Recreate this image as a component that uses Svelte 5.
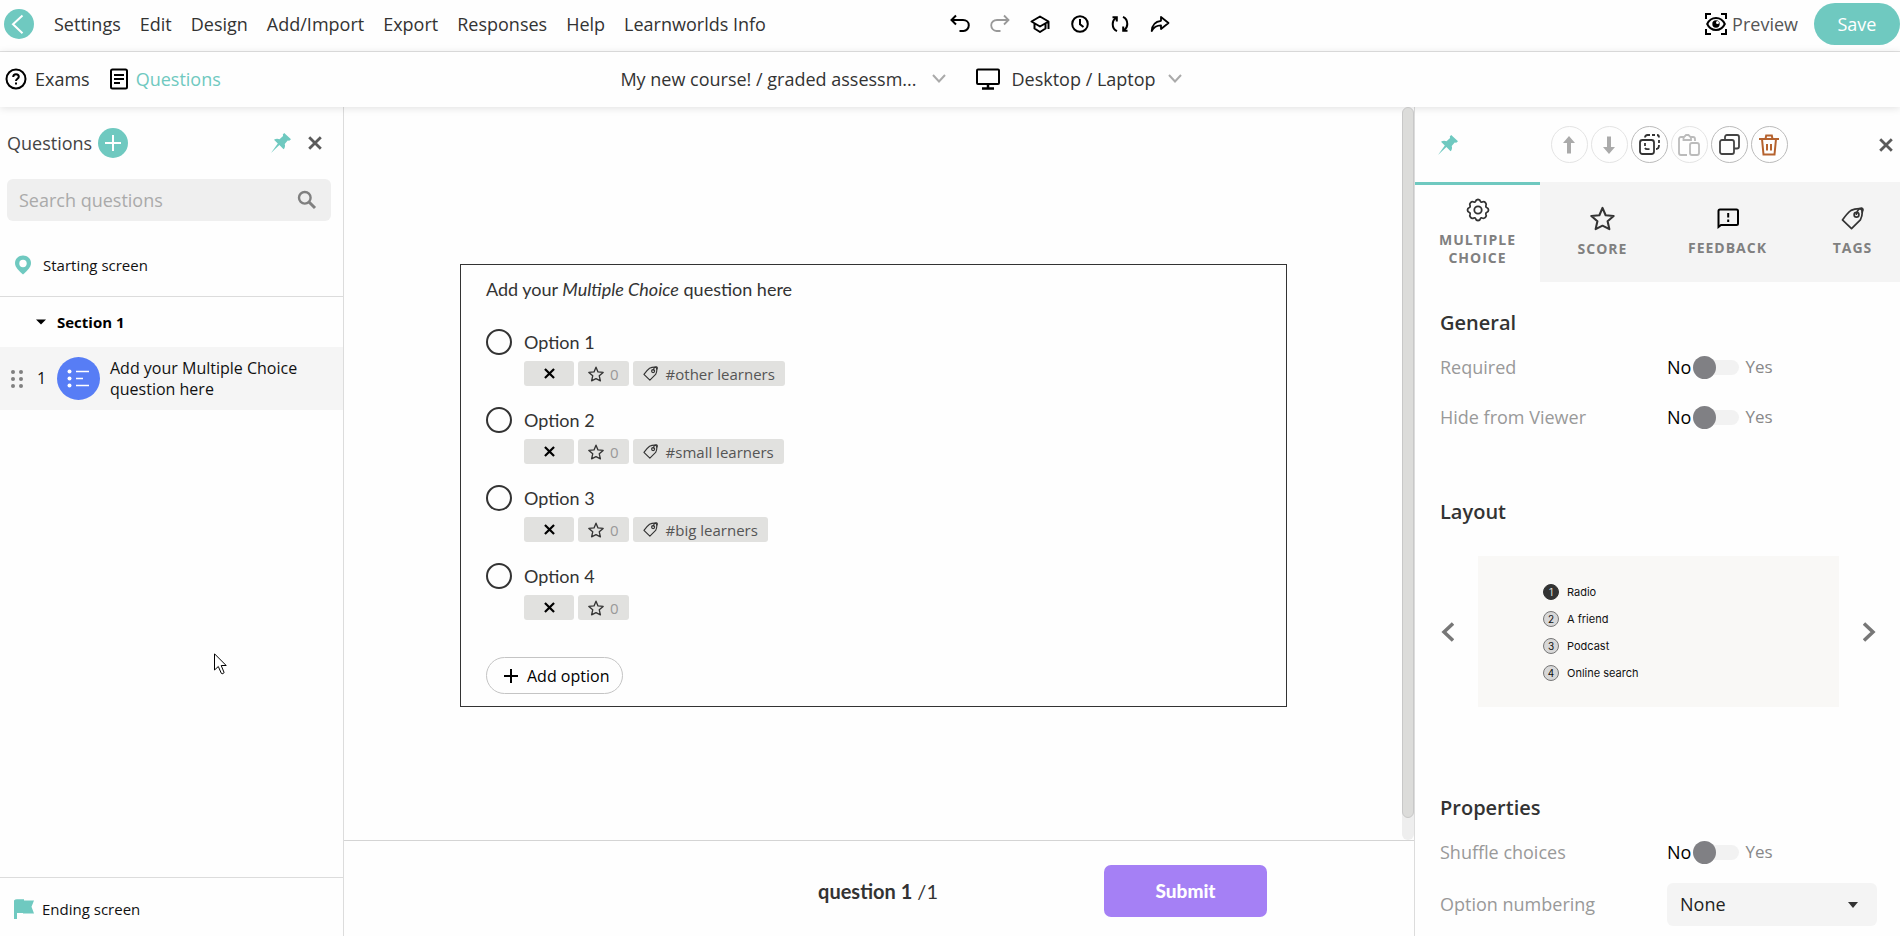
<script>
  const menu = ["Settings", "Edit", "Design", "Add/Import", "Export", "Responses", "Help", "Learnworlds Info"];

  let options = $state([
    { label: "Option 1", score: 0, tag: "#other learners" },
    { label: "Option 2", score: 0, tag: "#small learners" },
    { label: "Option 3", score: 0, tag: "#big learners" },
    { label: "Option 4", score: 0, tag: "" }
  ]);

  const layoutItems = ["Radio", "A friend", "Podcast", "Online search"];

  let tab = $state("choice");
  let search = $state("");
  let numbering = $state("None");
  let required = $state(false);
  let hidden = $state(false);
  let shuffle = $state(false);

  function addOption() {
    options.push({ label: "Option " + (options.length + 1), score: 0, tag: "" });
  }
</script>

{#snippet star(size)}
  <svg width={size} height={size} viewBox="0 0 24 24" fill="none" stroke="#333" stroke-width="2" stroke-linejoin="round">
    <path d="M12 1.8l3 7.1 7.7.7-5.8 5.1 1.7 7.5-6.6-3.3-6.6 3.3 1.7-7.5L1.3 9.6 9 8.9z" />
  </svg>
{/snippet}

{#snippet tagIcon(size)}
  <svg width={size} height={size} viewBox="0 0 24 24" fill="none" stroke="#333" stroke-width="1.800" stroke-linejoin="round" stroke-linecap="round">
    <path d="M1.500 13.500C4 10 7 6 10.500 3.500 13 2.300 16 1.800 19 1.800c2 0 3.200 1.500 3.200 3.700 0 3-.7 5.500-2 8L11 22.500z" />
    <circle cx="16.200" cy="8" r="2.500" />
    <path d="M16 7.500C17 4 19 1 21.500 1.200c1.800.3 1.800 2.300.5 4" />
  </svg>
{/snippet}

{#snippet pin()}
  <svg width="22" height="22" viewBox="0 0 22 22" fill="#6fc9c0">
    <path d="M14.200 1l6.800 6.200-1.800 1.500-1.500-.2-3 3.400c.7 1.900.3 3.800-1.100 5.400L9.400 13 1 21l6.800-9.400L4 7.700c1.800-1.200 3.700-1.300 5.500-.5l3.600-3.100-.3-1.700z" />
  </svg>
{/snippet}

{#snippet cross(size, color)}
  <svg width={size} height={size} viewBox="0 0 14 14" fill="none" stroke={color} stroke-width="2.800">
    <path d="M1.200 1.200l11.600 11.600M12.800 1.200L1.200 12.800" />
  </svg>
{/snippet}

{#snippet chevron()}
  <svg width="14" height="9" viewBox="0 0 14 9" fill="none" stroke="#aaa" stroke-width="2">
    <path d="M1 1l6 6.500L13 1" />
  </svg>
{/snippet}

<div class="app">
  <header class="topbar">
    <div class="left">
      <button class="round" aria-label="Back">
        <svg width="30" height="30" viewBox="0 0 30 30" fill="none" stroke="#fff" stroke-width="2"><path d="M18.500 6.500L9 15.200l9.500 9" /></svg>
      </button>
      <nav>
        {#each menu as item}
          <a href="#menu">{item}</a>
        {/each}
      </nav>
    </div>

    <div class="tools">
      <button aria-label="Undo">
        <svg width="20" height="20" viewBox="0 0 20 20" fill="none" stroke="#000" stroke-width="2"><path d="M6 1.500L1.500 6 6 10.500M1.500 6H13c3.300 0 5.800 2.200 5.800 5.200S16.500 17 13.500 17h-4" /></svg>
      </button>
      <button aria-label="Redo">
        <svg width="20" height="20" viewBox="0 0 20 20" fill="none" stroke="#999" stroke-width="1.800"><path d="M14 1.500L18.500 6 14 10.500M18.500 6H7C3.700 6 1.200 8.200 1.200 11.200S3.500 17 6.500 17h4" /></svg>
      </button>
      <button aria-label="Course">
        <svg width="20" height="20" viewBox="0 0 20 20" fill="none" stroke="#000" stroke-width="2" stroke-linejoin="round"><path d="M10 2.500L1.500 7.500l8.500 5 8.500-5zM4.500 9.500v5l5.500 3.500 5.500-3.500v-5M18.500 7.500V15" /></svg>
      </button>
      <button aria-label="History">
        <svg width="20" height="20" viewBox="0 0 20 20" fill="none" stroke="#000" stroke-width="2"><circle cx="10" cy="10" r="7.800" /><path d="M10 5v5.200l3.500 2.800" /></svg>
      </button>
      <button aria-label="Sync">
        <svg width="20" height="20" viewBox="0 0 20 20" fill="none" stroke="#000" stroke-width="2"><path d="M7 17.200C4.300 16 2.700 13.200 2.700 10c0-2.600 1.200-4.700 3.300-6.200M13 2.800c2.700 1.200 4.300 4 4.300 7.200 0 2.600-1.200 4.700-3.300 6.200" /><path d="M2.500 3.200h4.300v4.300M17.500 16.800h-4.300v-4.300" /></svg>
      </button>
      <button aria-label="Share">
        <svg width="20" height="20" viewBox="0 0 20 20" fill="none" stroke="#000" stroke-width="1.800" stroke-linejoin="round"><path d="M11 3l7.500 6L11 15v-3.700c-4.300 0-7.300 1.700-9.300 5.700.3-5.700 3.500-9.500 9.300-10.200z" /></svg>
      </button>
    </div>

    <div class="actions">
      <button class="preview">
        <svg width="22" height="22" viewBox="0 0 22 22" fill="none" stroke="#000" stroke-width="2"><path d="M1 6V1h5M16 1h5v5M21 16v5h-5M6 21H1v-5" /><path d="M2.200 11C4 7.200 7.200 5 11 5s7 2.200 8.800 6c-1.800 3.800-5 6-8.800 6s-7-2.200-8.800-6z" /><circle cx="11" cy="11" r="3.700" fill="#000" stroke="none" /><circle cx="12.500" cy="9.500" r="1.500" fill="#fff" stroke="none" /></svg>
        Preview
      </button>
      <button class="save">Save</button>
    </div>
  </header>

  <div class="subbar">
    <div class="views">
      <a href="#exams">
        <svg width="22" height="22" viewBox="0 0 22 22" fill="none" stroke="#000" stroke-width="2"><circle cx="11" cy="11" r="9.500" /><path d="M8.200 9c0-1.800 1.200-2.800 2.800-2.800s2.800 1 2.800 2.500c0 2-2.800 2-2.800 4.300M11 14.500v2" /></svg>
        Exams
      </a>
      <a href="#questions" class="on">
        <svg width="18" height="22" viewBox="0 0 18 22" fill="none" stroke="#000" stroke-width="2"><rect x="1" y="1.500" width="16" height="19" rx="1.500" /><path d="M4 7h10M4 11h10M4 15h6" /></svg>
        Questions
      </a>
    </div>
    <button class="picker course"><span>My new course! / graded assessm...</span>{@render chevron()}</button>
    <button class="picker">
      <svg width="24" height="22" viewBox="0 0 24 22" fill="none" stroke="#000" stroke-width="2"><rect x="1" y="1.500" width="22" height="14.500" rx="1" /><path d="M12 16v4M6 20.500h12" stroke-width="2.500" /></svg>
      <span>Desktop / Laptop</span>
      {@render chevron()}
    </button>
  </div>

  <div class="workspace">
    <aside class="questions">
      <div class="panel-head">
        <h2>Questions</h2>
        <button class="round" aria-label="Add question">
          <svg width="30" height="30" viewBox="0 0 30 30" stroke="#fff" stroke-width="2"><path d="M15 7v16M7 15h16" /></svg>
        </button>
        <button class="pin" aria-label="Pin panel">{@render pin()}</button>
        <button aria-label="Close panel">{@render cross(14, "#5a5a5a")}</button>
      </div>

      <label class="search">
        <input type="text" placeholder="Search questions" aria-label="Search questions" bind:value={search} />
        <svg width="20" height="20" viewBox="0 0 20 20" fill="none" stroke="#808080"><circle cx="7.800" cy="7.800" r="5.800" stroke-width="2.400" /><path d="M12 12l6 6" stroke-width="3" /></svg>
      </label>

      <a class="screen" href="#start">
        <svg width="16" height="20" viewBox="0 0 16 20"><path d="M8 .5c4.500 0 8 3.300 8 7.600 0 4-3.300 7.400-8 11.400C3.300 15.500 0 12.100 0 8.100 0 3.800 3.500.5 8 .5z" fill="#6fc9c0" /><circle cx="8" cy="8.500" r="3.700" fill="#fff" /></svg>
        Starting screen
      </a>

      <button class="section">
        <svg width="10" height="6" viewBox="0 0 10 6"><path d="M0 .5h10L5 5.500z" /></svg>
        Section 1
      </button>

      <a class="question" href="#q1">
        <svg width="12" height="20" viewBox="0 0 12 20" fill="#808080">
          {#each [3, 10, 17] as y}
            <circle cx="2" cy={y} r="2" /><circle cx="10" cy={y} r="2" />
          {/each}
        </svg>
        <span class="num">1</span>
        <svg width="43" height="43" viewBox="0 0 43 43"><circle cx="21.500" cy="21.500" r="21.500" fill="#577df5" /><g fill="#fff"><circle cx="12.500" cy="14.500" r="2" /><circle cx="12.500" cy="21.500" r="2" /><circle cx="12.500" cy="28.500" r="2" /></g><path d="M19 14.500h13M19 21.500h7M19 28.500h13" stroke="#fff" stroke-width="1.500" /></svg>
        <span class="title">Add your Multiple Choice question here</span>
      </a>

      <a class="screen ending" href="#end">
        <svg width="20" height="20" viewBox="0 0 20 20" fill="#6fc9c0"><path d="M0 1.500Q1 .3 3 .3h7v1.200h10l-2.500 6.300L20 14.500H9V14H3v6H0z" /></svg>
        Ending screen
      </a>
    </aside>

    <main>
      <div class="canvas">
        <section class="card">
          <p class="ask">Add your <em>Multiple Choice</em> question here</p>
          {#each options as opt}
            <div class="option">
              <label><input type="radio" name="answer" />{opt.label}</label>
              <div class="chips">
                <button class="chip wrong" aria-label="Incorrect">{@render cross(11, "#000")}</button>
                <button class="chip score">{@render star(16)}{opt.score}</button>
                {#if opt.tag}
                  <button class="chip tag">{@render tagIcon(15)}{opt.tag}</button>
                {/if}
              </div>
            </div>
          {/each}
          <button class="add" onclick={addOption}>
            <svg width="14" height="14" viewBox="0 0 14 14" stroke="#000" stroke-width="2"><path d="M7 0v14M0 7h14" /></svg>
            Add option
          </button>
        </section>
        <div class="scrollbar"><div class="thumb"></div></div>
      </div>
      <footer>
        <p><b>question 1</b> /1</p>
        <button class="submit">Submit</button>
      </footer>
    </main>

    <aside class="settings">
      <div class="settings-head">
        {@render pin()}
        <div class="circles">
          <button class="off" aria-label="Move up">
            <svg width="12" height="18" viewBox="0 0 12 18" fill="#aaa"><path d="M6 0l6 7H8v10.500H4V7H0z" /></svg>
          </button>
          <button class="off" aria-label="Move down">
            <svg width="12" height="18" viewBox="0 0 12 18" fill="#aaa"><path d="M6 18l6-7H8V.5H4V11H0z" /></svg>
          </button>
          <button aria-label="Copy">
            <svg width="21" height="21" viewBox="0 0 21 21" fill="none" stroke="#333" stroke-width="1.800"><rect x="1" y="6" width="14" height="14" rx="2.500" /><path d="M6 3.500C6 2 7 1 8.500 1H11M13 1h3M18 1c1.500 0 2 1 2 2.500M20 6v3M20 11c0 2.500-1 4-3 4M6 9v3M6 14c.5 1 1 1.200 2 1.200h2.500" /></svg>
          </button>
          <button class="off" aria-label="Paste">
            <svg width="22" height="22" viewBox="0 0 22 22" fill="none" stroke="#bbb" stroke-width="1.800"><path d="M6 3H3C1.800 3 1 3.800 1 5v14c0 1.200.8 2 2 2h6M12 3h3c1.200 0 2 .8 2 2v2" /><path d="M5.500 6V3.500L8 1h2.500L13 3.500V6z" /><rect x="12" y="9" width="9" height="12" rx="2" /></svg>
          </button>
          <button aria-label="Duplicate">
            <svg width="21" height="21" viewBox="0 0 21 21" fill="none" stroke="#444" stroke-width="1.800"><rect x="1" y="6" width="14" height="14" rx="2" /><path d="M6 6V3c0-1.200.8-2 2-2h10c1.200 0 2 .8 2 2v9.500c0 1.200-.8 2-2 2h-3" /></svg>
          </button>
          <button aria-label="Delete">
            <svg width="20" height="22" viewBox="0 0 20 22" fill="none" stroke="#b5622e" stroke-width="2"><path d="M0 5h20M6.500 5l.7-3.500h5.600l.7 3.500M3 5l1.500 15.500h11L17 5M8 10v6.500M12 10v6.500" /></svg>
          </button>
        </div>
        <button aria-label="Close settings">{@render cross(14, "#5a5a5a")}</button>
      </div>

      <div class="tabs">
        <button class:active={tab === "choice"} onclick={() => (tab = "choice")}>
          <svg width="24" height="24" viewBox="0 0 24 24" fill="none" stroke="#333" stroke-width="1.800" stroke-linejoin="round"><path d="M9.500 3.500Q10 1.500 12 1.500T14.500 3.500Q15 4.600 16.200 4Q18 3 19.400 4.600T19.900 7.800Q19.500 9 20.600 9.500Q22.500 10.200 22.500 12T20.600 14.500Q19.500 15 19.900 16.200Q20.900 18 19.400 19.400T16.200 20Q15 19.400 14.500 20.500Q14 22.500 12 22.500T9.500 20.500Q9 19.400 7.800 20Q6 21 4.600 19.400T4.100 16.200Q4.500 15 3.400 14.500Q1.500 13.800 1.500 12T3.400 9.500Q4.500 9 4.100 7.800Q3.100 6 4.600 4.600T7.800 4Q9 4.600 9.500 3.500z" /><circle cx="12" cy="12" r="3.700" /></svg>
          Multiple choice
        </button>
        <button class:active={tab === "score"} onclick={() => (tab = "score")}>
          {@render star(25)}
          Score
        </button>
        <button class:active={tab === "feedback"} onclick={() => (tab = "feedback")}>
          <svg width="22" height="22" viewBox="0 0 22 22" fill="none" stroke="#000" stroke-width="2"><path d="M1.500 19V3c0-1 .5-1.500 1.500-1.500h16.500c1 0 1.500.5 1.500 1.500v12.500c0 1-.5 1.500-1.500 1.500H4z" /><path d="M11.200 5v4.500M11.200 11.500v2.500" /></svg>
          Feedback
        </button>
        <button class:active={tab === "tags"} onclick={() => (tab = "tags")}>
          {@render tagIcon(23)}
          Tags
        </button>
      </div>

      <div class="fields">
        <h3>General</h3>
        <div class="field">
          <label for="required">Required</label>
          <div class="switch"><span>No</span><input type="checkbox" id="required" bind:checked={required} /><small>Yes</small></div>
        </div>
        <div class="field">
          <label for="hidden">Hide from Viewer</label>
          <div class="switch"><span>No</span><input type="checkbox" id="hidden" bind:checked={hidden} /><small>Yes</small></div>
        </div>

        <h3 class="spaced">Layout</h3>
        <div class="carousel">
          <button aria-label="Previous layout">
            <svg width="14" height="20" viewBox="0 0 14 20" fill="none" stroke="#777" stroke-width="3.500"><path d="M13 1.500L4 10l9 8.500" /></svg>
          </button>
          <ol>
            {#each layoutItems as item, i}
              <li><i class:picked={i === 0}>{i + 1}</i>{item}</li>
            {/each}
          </ol>
          <button aria-label="Next layout">
            <svg width="14" height="20" viewBox="0 0 14 20" fill="none" stroke="#777" stroke-width="3.500"><path d="M1 1.500l9 8.500-9 8.500" /></svg>
          </button>
        </div>

        <h3 class="spaced">Properties</h3>
        <div class="field">
          <label for="shuffle">Shuffle choices</label>
          <div class="switch"><span>No</span><input type="checkbox" id="shuffle" bind:checked={shuffle} /><small>Yes</small></div>
        </div>
        <div class="field">
          <label for="numbering">Option numbering</label>
          <div class="select">
            <select id="numbering" bind:value={numbering}>
              <option>None</option>
              <option>Letters</option>
              <option>Numbers</option>
            </select>
            <svg width="10" height="6" viewBox="0 0 10 6" fill="#333"><path d="M0 0h10L5 6z" /></svg>
          </div>
        </div>
      </div>
    </aside>
  </div>

  <svg class="cursor" width="13" height="22" viewBox="0 0 13 22" fill="#fff" stroke="#000"><path d="M.5.800v16.200l3.800-3.500 3 6.800c.8.900 2.700.3 2.700-1L7.200 12.500h5z" /></svg>
</div>

<style>
  :global(body) {
    background: #fefefe;
  }

  .app {
    display: flex;
    flex-direction: column;
    height: 100vh;
    overflow: hidden;
    position: relative;
    font-family: "Open Sans", "Noto Sans", sans-serif;
    font-size: 18px;
    line-height: 24px;
    color: #333;
  }

  .app * {
    box-sizing: border-box;
  }

  svg {
    display: block;
    flex: none;
  }

  button {
    display: flex;
    align-items: center;
    padding: 0;
    border: none;
    background: none;
    color: inherit;
    font: inherit;
    cursor: pointer;
  }

  a {
    color: inherit;
    text-decoration: none;
  }

  h2, h3, p, ol {
    margin: 0;
    padding: 0;
  }

  .round {
    flex: none;
    width: 30px;
    height: 30px;
    border-radius: 50%;
    background: #6fc9c0;
  }

  /* top bars */
  .topbar {
    display: flex;
    align-items: center;
    flex: none;
    height: 52px;
    padding-bottom: 4px;
    border-bottom: 1px solid #e2e2e2;
  }

  .left {
    display: flex;
    align-items: center;
    gap: 20px;
    flex: none;
    width: 50%;
    padding-left: 4px;
  }

  nav {
    display: flex;
    gap: 19px;
    white-space: nowrap;
  }

  .tools {
    display: flex;
    gap: 20px;
  }

  .actions {
    display: flex;
    align-items: center;
    gap: 16px;
    margin-left: auto;
  }

  .preview {
    gap: 5px;
    color: #555;
  }

  .save {
    justify-content: center;
    width: 86px;
    height: 42px;
    border-radius: 21px;
    background: #6fc9c0;
    color: #fff;
  }

  .subbar {
    display: flex;
    align-items: center;
    flex: none;
    height: 55px;
    padding: 0 0 2px 5px;
    position: relative;
    box-shadow: 0 1px 8px rgba(0, 0, 0, 0.12);
  }

  .views {
    display: flex;
    gap: 20px;
    width: 32%;
  }

  .views a {
    display: flex;
    align-items: center;
    gap: 8px;
  }

  .views .on {
    color: #6fc9c0;
  }

  .picker {
    gap: 12px;
  }

  .course {
    gap: 15px;
    margin: 0 30px 0 9px;
  }

  /* left panel */
  .workspace {
    display: grid;
    grid-template-columns: 344px 1fr 486px;
    flex: 1;
    min-height: 0;
  }

  .questions {
    display: flex;
    flex-direction: column;
    border-right: 1px solid #dcdcdc;
    font-size: 15px;
    color: #111;
  }

  .panel-head {
    display: flex;
    align-items: center;
    height: 72px;
    padding: 0 21px 0 7px;
  }

  .panel-head h2 {
    margin-right: 6px;
    font-size: 18px;
    font-weight: 400;
    color: #444;
  }

  .pin {
    margin: 0 16px 0 auto;
  }

  .search {
    display: flex;
    align-items: center;
    height: 42px;
    margin: 0 12px 0 7px;
    padding: 0 14px 0 12px;
    border-radius: 6px;
    background: #efefef;
  }

  .search input {
    flex: 1;
    min-width: 0;
    padding: 0;
    border: none;
    outline: none;
    background: none;
    font: inherit;
    font-size: 18px;
  }

  .search input::placeholder {
    color: #aaa;
  }

  .screen {
    display: flex;
    align-items: center;
    gap: 12px;
    height: 64px;
    margin-top: 12px;
    padding-left: 15px;
    border-bottom: 1px solid #dcdcdc;
  }

  .section {
    gap: 11px;
    height: 50px;
    padding-left: 36px;
    font-weight: 700;
    color: #000;
  }

  .question {
    display: flex;
    align-items: center;
    height: 63px;
    padding: 0 30px 0 11px;
    background: #f5f5f5;
    font-size: 16px;
    line-height: 21px;
  }

  .num {
    flex: none;
    width: 34px;
    padding-left: 14px;
  }

  .title {
    padding-left: 10px;
  }

  .ending {
    gap: 8px;
    height: 59px;
    margin-top: auto;
    padding: 4px 0 0 14px;
    border-top: 1px solid #dcdcdc;
    border-bottom: none;
  }

  /* canvas */
  main {
    display: flex;
    flex-direction: column;
    min-width: 0;
    font-family: Lato, "Open Sans", sans-serif;
  }

  .canvas {
    display: flex;
    justify-content: center;
    flex: 1;
    position: relative;
    padding: 157px 116px 0;
  }

  .card {
    flex: 1;
    align-self: flex-start;
    max-width: 828px;
    margin-right: 11px;
    padding: 12px 25px;
    border: 1px solid #333;
  }

  .ask {
    margin-bottom: 25px;
    font-size: 18px;
  }

  .option {
    height: 78px;
  }

  .option label {
    display: flex;
    align-items: center;
    gap: 12px;
    height: 32px;
    font-size: 18px;
  }

  .option input {
    appearance: none;
    width: 26px;
    height: 26px;
    margin: 0;
    border: 2px solid #333;
    border-radius: 50%;
  }

  .option input:checked {
    background: #333;
  }

  .chips {
    display: flex;
    gap: 4px;
    padding: 3px 0 0 38px;
  }

  .chip {
    height: 25px;
    border-radius: 3px;
    background: #e1e1df;
    font-family: "Open Sans", sans-serif;
    font-size: 15px;
    color: #555;
  }

  .wrong {
    justify-content: center;
    width: 50px;
  }

  .score {
    gap: 6px;
    padding: 0 10px;
    color: #999;
  }

  .tag {
    gap: 8px;
    padding: 0 10px;
  }

  .add {
    gap: 9px;
    height: 37px;
    margin-top: 19px;
    padding: 0 13px 0 17px;
    border: 1px solid #c4c4c4;
    border-radius: 19px;
    font-family: "Open Sans", sans-serif;
    font-size: 16px;
    color: #000;
  }

  /* fixed to the right edge of the canvas */
  .scrollbar {
    position: absolute;
    top: 0;
    right: 0;
    bottom: 0;
    width: 12px;
    border-radius: 6px;
    background: #eee;
  }

  .thumb {
    height: 97%;
    border: 1px solid #c8c8c8;
    border-radius: 6px;
    background: #dcdcda;
  }

  footer {
    display: flex;
    align-items: center;
    justify-content: flex-end;
    gap: 166px;
    height: 96px;
    padding: 5px 147px 0 0;
    border-top: 1px solid #d4d4d4;
    font-size: 20px;
  }

  .submit {
    justify-content: center;
    width: 163px;
    height: 52px;
    border-radius: 7px;
    background: #a580f5;
    font-size: 19px;
    font-weight: 900;
    color: #fff;
  }

  /* right panel */
  .settings {
    min-width: 0;
    overflow: hidden;
    border-left: 1px solid #dcdcdc;
  }

  .settings-head {
    display: flex;
    align-items: center;
    justify-content: space-between;
    height: 75px;
    padding: 0 7px 0 22px;
  }

  .circles {
    display: flex;
    gap: 3px;
  }

  .circles button {
    justify-content: center;
    width: 37px;
    height: 37px;
    border: 1px solid #bbb;
    border-radius: 50%;
  }

  .circles .off {
    border-color: #e4e4e4;
  }

  .tabs {
    display: flex;
    height: 100px;
    background: #f4f4f4;
  }

  .tabs button {
    flex: none;
    flex-direction: column;
    justify-content: center;
    gap: 9px;
    width: 125px;
    padding: 0 20px 3px;
    border-top: 3px solid transparent;
    font-size: 14px;
    line-height: 18px;
    font-weight: 700;
    letter-spacing: 1px;
    text-transform: uppercase;
    color: #808080;
  }

  .tabs .active {
    border-top-color: #6fc9c0;
    background: #fefefe;
  }

  .fields {
    padding: 29px 23px 0 25px;
  }

  h3 {
    height: 31px;
    font-size: 20px;
    font-weight: 600;
  }

  h3.spaced {
    margin-top: 58px;
  }

  .field {
    display: grid;
    grid-template-columns: 1fr 210px;
    align-items: center;
    min-height: 50px;
  }

  .field:last-child {
    min-height: 54px;
  }

  .field label {
    color: #999;
  }

  .switch {
    display: flex;
    align-items: center;
    color: #000;
  }

  .switch input {
    appearance: none;
    display: flex;
    align-items: center;
    width: 46px;
    height: 15px;
    margin: 0 6px 0 2px;
    border-radius: 8px;
    background: #f2f2f2;
  }

  .switch input::before {
    content: "";
    width: 23px;
    height: 23px;
    border-radius: 50%;
    background: #808084;
  }

  .switch input:checked {
    justify-content: flex-end;
  }

  .switch small {
    font-size: 17px;
    color: #888;
  }

  .carousel {
    display: flex;
    align-items: center;
    gap: 24px;
    margin: 25px 0 89px;
  }

  .carousel ol {
    flex: 1;
    height: 151px;
    padding: 22px 0 0 65px;
    background: #f9f8f6;
    list-style: none;
    font-family: Inter, sans-serif;
    font-size: 11px;
    color: #111;
  }

  .carousel + h3.spaced {
    margin-top: 0;
  }

  .carousel li {
    display: flex;
    align-items: center;
    gap: 8px;
    height: 27px;
  }

  .carousel i {
    width: 16px;
    height: 16px;
    border: 1px solid #777;
    border-radius: 50%;
    background: #d8d8d8;
    font-size: 10px;
    font-style: normal;
    line-height: 14px;
    text-align: center;
  }

  .carousel .picked {
    border-color: #333;
    background: #333;
    color: #ddd;
  }

  .select {
    position: relative;
  }

  .select select {
    appearance: none;
    display: block;
    width: 100%;
    height: 43px;
    padding: 0 13px;
    border: none;
    border-radius: 6px;
    background: #f4f4f4;
    font: inherit;
    color: #222;
  }

  .select svg {
    position: absolute;
    top: 19px;
    right: 19px;
    pointer-events: none;
  }

  .cursor {
    position: absolute;
    top: 653px;
    left: 214px;
    pointer-events: none;
  }
</style>
